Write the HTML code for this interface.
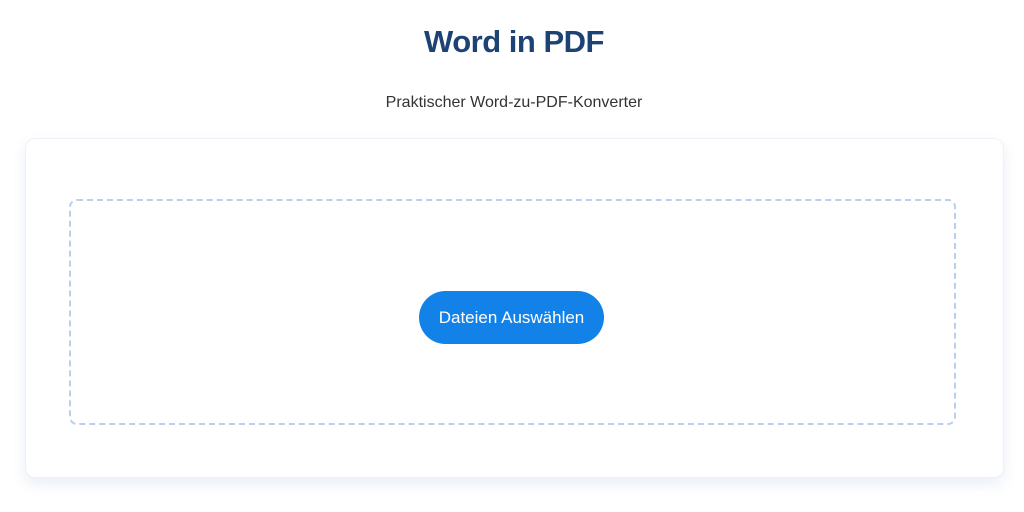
<!DOCTYPE html>
<html><head><meta charset="utf-8"><style>
html,body{margin:0;padding:0;background:#fff;width:1024px;height:512px;overflow:hidden;font-family:"Liberation Sans",sans-serif;}
h1{position:absolute;left:2px;width:1024px;top:24px;margin:0;text-align:center;font-size:31px;font-weight:bold;color:#1d4274;letter-spacing:-0.5px;}
.sub{position:absolute;left:2px;width:1024px;top:94px;text-align:center;font-size:16px;color:#333;}
.card{position:absolute;left:25px;top:138px;width:979px;height:340px;background:#fff;border-radius:10px;border:1px solid #eef2f8;box-sizing:border-box;box-shadow:0 6px 14px rgba(40,90,180,0.10);}
.drop{position:absolute;left:69px;top:199px;width:887px;height:226px;border:2px dashed #b8cfee;border-radius:8px;box-sizing:border-box;}
.btn{position:absolute;left:419px;top:291px;width:185px;height:53px;border-radius:27px;background:#1282e8;color:#fff;font-size:17px;text-align:center;line-height:53px;}
</style></head><body>
<h1>Word in PDF</h1>
<div class="sub">Praktischer Word-zu-PDF-Konverter</div>
<div class="card"></div>
<div class="drop"></div>
<div class="btn">Dateien Auswählen</div>
</body></html>
